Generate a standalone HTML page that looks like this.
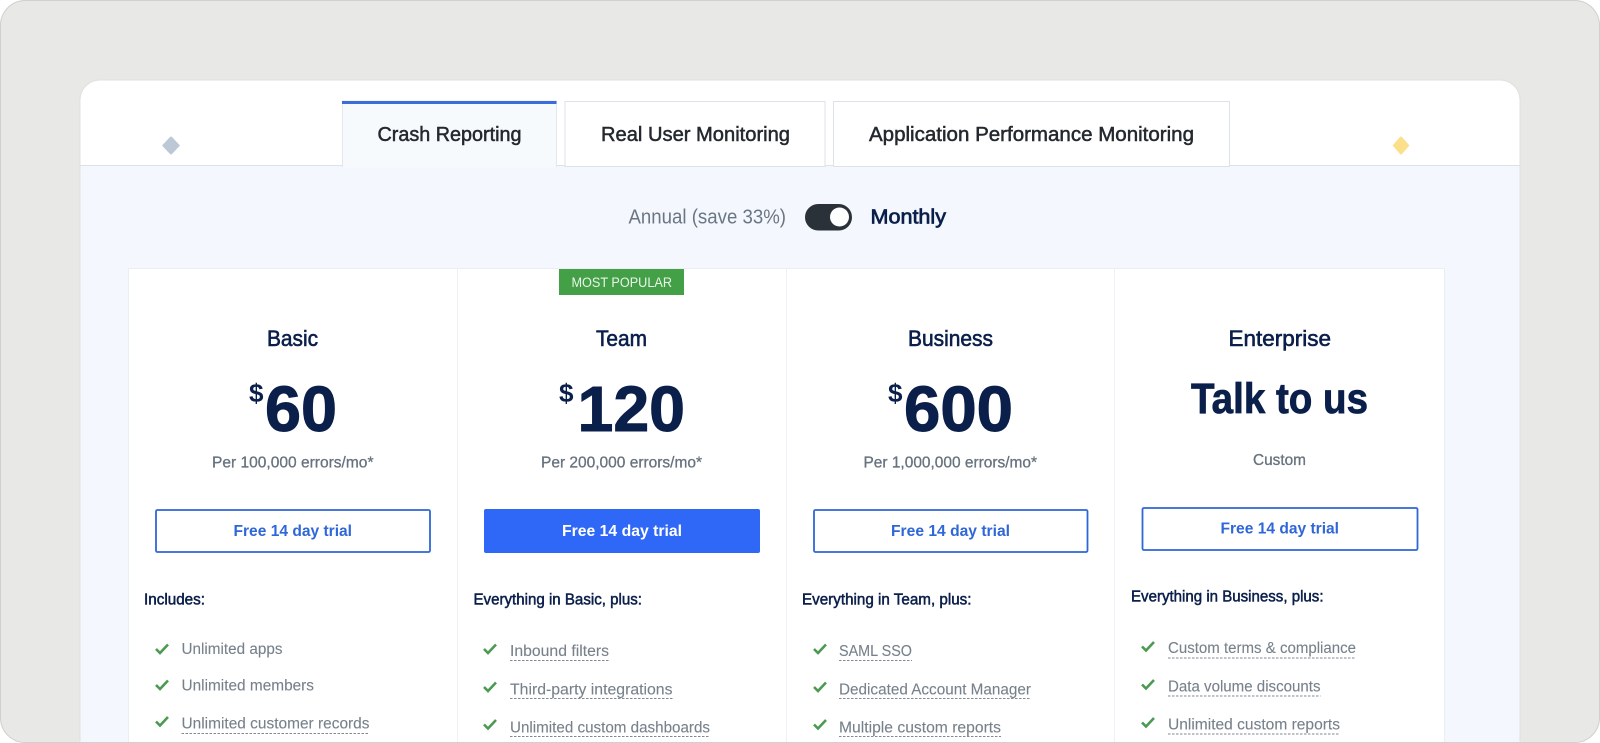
<!DOCTYPE html>
<html lang="en">
<head>
<meta charset="utf-8">
<title>Pricing</title>
<style>
html,body{margin:0;padding:0;width:1600px;height:743px;overflow:hidden;background:#fff}
svg{display:block}
text{font-family:"Liberation Sans",sans-serif}
.tab{font-size:20px;fill:#24292f;stroke:#24292f;stroke-width:.5px}
.title{font-size:22px;fill:#0b1f4b;stroke:#0b1f4b;stroke-width:.6px}
.price{font-size:64px;font-weight:700;fill:#0b1f4b;stroke:#0b1f4b;stroke-width:1px}
.cur{font-size:26px;font-weight:700;fill:#0b1f4b}
.per{font-size:15.5px;fill:#67727e;stroke:#67727e;stroke-width:.3px}
.btn{font-size:16px;font-weight:700;fill:#2f66d8}
.btnw{font-size:16px;font-weight:700;fill:#fff}
.head{font-size:15.5px;fill:#0b1f4b;stroke:#0b1f4b;stroke-width:.5px}
.li{font-size:15.5px;fill:#77818b;stroke:#77818b;stroke-width:.1px}
.dash{stroke:#808a94;stroke-width:1;stroke-dasharray:2.5 1.5}
.chk{fill:none;stroke:#4c9a52;stroke-width:2.6}
.box{fill:#fff;stroke:#2f66d8;stroke-width:1.8}
.sep{stroke:#eef1f5;stroke-width:1}
</style>
</head>
<body>
<svg width="1600" height="743" viewBox="0 0 1600 743" xmlns="http://www.w3.org/2000/svg">
<defs>
<clipPath id="outer"><rect x="0" y="0" width="1600" height="743" rx="25"/></clipPath>
<clipPath id="card"><path d="M80 100a20 20 0 0 1 20-20H1500a20 20 0 0 1 20 20V743H80Z"/></clipPath>
</defs>
<rect width="1600" height="743" fill="#fff"/>
<g clip-path="url(#outer)">
<rect width="1600" height="743" fill="#e8e8e6"/>
<g clip-path="url(#card)">
<rect x="80" y="80" width="1440" height="663" fill="#fff"/>
<rect x="80" y="166" width="1440" height="577" fill="#f4f8fe"/>
<line x1="80" y1="165.500" x2="1520" y2="165.500" stroke="#dde2e8"/>

<path d="M171 136.500q.5 0 1 .5l7.500 8q.5.500 0 1l-7.500 8q-1 1-2 0l-7.500-8q-.5-.5 0-1l7.500-8q.5-.5 1-.5z" fill="#bcc8d6"/>
<path d="M1401 136.500q.5 0 1 .5l7 8q.5.500 0 1l-7 8q-1 1-2 0l-7-8q-.5-.5 0-1l7-8q.5-.5 1-.5z" fill="#fbdf8a"/>

<rect x="342.500" y="101" width="214" height="65.500" fill="#f7fafd" stroke="#e4e8ed"/>
<rect x="342" y="101" width="214.500" height="3" fill="#3a6ddb"/>
<rect x="343" y="165" width="213" height="3" fill="#f6f9fd"/>
<rect x="565" y="101.500" width="260" height="65" fill="#fff" stroke="#dde2e8"/>
<rect x="833.500" y="101.500" width="396" height="65" fill="#fff" stroke="#dde2e8"/>

<text class="tab" x="377.500" y="141" textLength="144" lengthAdjust="spacingAndGlyphs">Crash Reporting</text>
<text class="tab" x="601" y="141" textLength="189" lengthAdjust="spacingAndGlyphs">Real User Monitoring</text>
<text class="tab" x="869" y="141" textLength="325" lengthAdjust="spacingAndGlyphs">Application Performance Monitoring</text>

<text x="628.500" y="223.500" font-size="20" fill="#6b7683" textLength="157.500" lengthAdjust="spacingAndGlyphs">Annual (save 33%)</text>
<rect x="805" y="204" width="47" height="26.500" rx="13.250" fill="#2a3138"/>
<circle cx="839.500" cy="217" r="9.500" fill="#fff"/>
<text x="870.500" y="223.500" font-size="20" fill="#0b1f4b" stroke="#0b1f4b" stroke-width=".7" textLength="75.500" lengthAdjust="spacingAndGlyphs">Monthly</text>

<rect x="128.500" y="268.500" width="1316" height="480" fill="#fff" stroke="#e9eef3"/>
<line class="sep" x1="457.500" y1="268" x2="457.500" y2="743"/>
<line class="sep" x1="786.500" y1="268" x2="786.500" y2="743"/>
<line class="sep" x1="1114.500" y1="268" x2="1114.500" y2="743"/>

<rect x="559" y="269" width="125" height="26" fill="#44a047"/>
<text x="571.500" y="287" font-size="13.500" fill="#eaf5ea" textLength="100.500" lengthAdjust="spacingAndGlyphs">MOST POPULAR</text>

<text class="title" x="267" y="346" textLength="51" lengthAdjust="spacingAndGlyphs">Basic</text>
<text class="title" x="596" y="346" textLength="51" lengthAdjust="spacingAndGlyphs">Team</text>
<text class="title" x="908" y="346" textLength="85" lengthAdjust="spacingAndGlyphs">Business</text>
<text class="title" x="1228.500" y="346" textLength="102.500" lengthAdjust="spacingAndGlyphs">Enterprise</text>

<text class="cur" x="249" y="402" textLength="14.500" lengthAdjust="spacingAndGlyphs">$</text>
<text class="price" x="265" y="431" textLength="72" lengthAdjust="spacingAndGlyphs">60</text>
<text class="cur" x="559" y="402" textLength="14.500" lengthAdjust="spacingAndGlyphs">$</text>
<text class="price" x="577.500" y="431" textLength="107.500" lengthAdjust="spacingAndGlyphs">120</text>
<text class="cur" x="888" y="402" textLength="14.500" lengthAdjust="spacingAndGlyphs">$</text>
<text class="price" x="904" y="431" textLength="109" lengthAdjust="spacingAndGlyphs">600</text>
<text x="1191" y="413" font-size="43" font-weight="700" fill="#0b1f4b" stroke="#0b1f4b" stroke-width=".8" textLength="177" lengthAdjust="spacingAndGlyphs">Talk to us</text>

<text class="per" x="212" y="467.500" textLength="161.500" lengthAdjust="spacingAndGlyphs">Per 100,000 errors/mo*</text>
<text class="per" x="541" y="467.500" textLength="161" lengthAdjust="spacingAndGlyphs">Per 200,000 errors/mo*</text>
<text class="per" x="863.500" y="467.500" textLength="173.500" lengthAdjust="spacingAndGlyphs">Per 1,000,000 errors/mo*</text>
<text class="per" x="1253" y="465" textLength="53" lengthAdjust="spacingAndGlyphs">Custom</text>

<rect class="box" x="156" y="510" width="274" height="42" rx="1.500"/>
<rect x="484" y="509" width="276" height="44" rx="2" fill="#2f67f6"/>
<rect class="box" x="814" y="510" width="273.500" height="42" rx="1.500"/>
<rect class="box" x="1142.500" y="508" width="275" height="42" rx="1.500"/>
<text class="btn" x="233.500" y="536" textLength="118.500" lengthAdjust="spacingAndGlyphs">Free 14 day trial</text>
<text class="btnw" x="562" y="536" textLength="120" lengthAdjust="spacingAndGlyphs">Free 14 day trial</text>
<text class="btn" x="891" y="536" textLength="119" lengthAdjust="spacingAndGlyphs">Free 14 day trial</text>
<text class="btn" x="1220.500" y="533.500" textLength="118.500" lengthAdjust="spacingAndGlyphs">Free 14 day trial</text>

<text class="head" x="144" y="604.500" textLength="61" lengthAdjust="spacingAndGlyphs">Includes:</text>
<text class="head" x="473.500" y="604.500" textLength="168.500" lengthAdjust="spacingAndGlyphs">Everything in Basic, plus:</text>
<text class="head" x="802" y="604.500" textLength="169.500" lengthAdjust="spacingAndGlyphs">Everything in Team, plus:</text>
<text class="head" x="1131" y="601.500" textLength="192.500" lengthAdjust="spacingAndGlyphs">Everything in Business, plus:</text>

<!-- column 1 -->
<path class="chk" d="M156 649l4 4 8-8.500"/>
<path class="chk" d="M156 685l4 4 8-8.500"/>
<path class="chk" d="M156 721.500l4 4 8-8.500"/>
<text class="li" x="181.500" y="654" textLength="101" lengthAdjust="spacingAndGlyphs">Unlimited apps</text>
<text class="li" x="181.500" y="690.500" textLength="132.500" lengthAdjust="spacingAndGlyphs">Unlimited members</text>
<text class="li" x="181.500" y="728.500" textLength="188" lengthAdjust="spacingAndGlyphs">Unlimited customer records</text>
<line class="dash" x1="181.500" y1="733.500" x2="369.500" y2="733.500"/>

<!-- column 2 -->
<path class="chk" d="M484 649l4 4 8-8.500"/>
<path class="chk" d="M484 687l4 4 8-8.500"/>
<path class="chk" d="M484 724.500l4 4 8-8.500"/>
<text class="li" x="510" y="656" textLength="99" lengthAdjust="spacingAndGlyphs">Inbound filters</text>
<text class="li" x="510" y="694.500" textLength="162.500" lengthAdjust="spacingAndGlyphs">Third-party integrations</text>
<text class="li" x="510" y="732.500" textLength="200" lengthAdjust="spacingAndGlyphs">Unlimited custom dashboards</text>
<line class="dash" x1="510" y1="660.500" x2="609" y2="660.500"/>
<line class="dash" x1="510" y1="698.500" x2="672.500" y2="698.500"/>
<line class="dash" x1="510" y1="736.500" x2="710" y2="736.500"/>

<!-- column 3 -->
<path class="chk" d="M814 649l4 4 8-8.500"/>
<path class="chk" d="M814 687l4 4 8-8.500"/>
<path class="chk" d="M814 724.500l4 4 8-8.500"/>
<text class="li" x="839" y="656" textLength="73" lengthAdjust="spacingAndGlyphs">SAML SSO</text>
<text class="li" x="839" y="694.500" textLength="192" lengthAdjust="spacingAndGlyphs">Dedicated Account Manager</text>
<text class="li" x="839" y="732.500" textLength="162" lengthAdjust="spacingAndGlyphs">Multiple custom reports</text>
<line class="dash" x1="839" y1="660.500" x2="912" y2="660.500"/>
<line class="dash" x1="839" y1="698.500" x2="1031" y2="698.500"/>
<line class="dash" x1="839" y1="736.500" x2="1001" y2="736.500"/>

<!-- column 4 -->
<path class="chk" d="M1142 646.500l4 4 8-8.500"/>
<path class="chk" d="M1142 684.500l4 4 8-8.500"/>
<path class="chk" d="M1142 722.500l4 4 8-8.500"/>
<text class="li" x="1168" y="653" textLength="188" lengthAdjust="spacingAndGlyphs">Custom terms &amp; compliance</text>
<text class="li" x="1168" y="691.500" textLength="152.500" lengthAdjust="spacingAndGlyphs">Data volume discounts</text>
<text class="li" x="1168" y="729.500" textLength="172" lengthAdjust="spacingAndGlyphs">Unlimited custom reports</text>
<line class="dash" x1="1168" y1="658" x2="1356" y2="658"/>
<line class="dash" x1="1168" y1="696" x2="1320.500" y2="696"/>
<line class="dash" x1="1168" y1="734" x2="1340" y2="734"/>
</g>
<path d="M80 743V100a20 20 0 0 1 20-20H1500a20 20 0 0 1 20 20V743" fill="none" stroke="#e0e0de"/>
</g>
<rect x=".5" y=".5" width="1599" height="742" rx="25" fill="none" stroke="#d0d0ce"/>
</svg>
</body>
</html>
